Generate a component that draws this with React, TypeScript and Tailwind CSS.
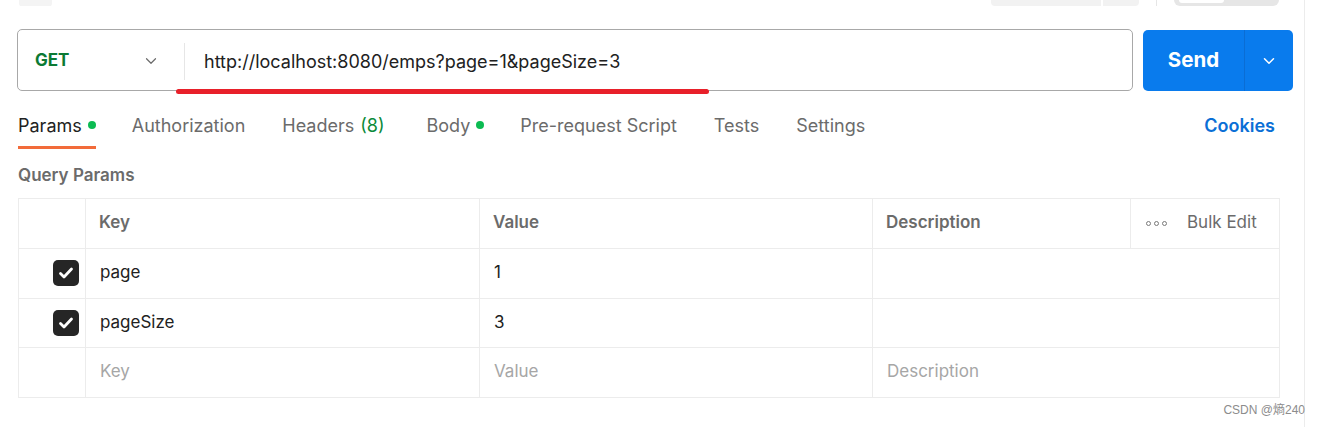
import { ChevronDown } from "lucide-react";

const tabs = [
  { label: "Params", dot: true, active: true, gap: "mr-[36px]" },
  { label: "Authorization", gap: "mr-[37px]" },
  { label: "Headers", count: "(8)", gap: "mr-[42px]" },
  { label: "Body", dot: true, gap: "mr-[36px]" },
  { label: "Pre-request Script", gap: "mr-[37px]" },
  { label: "Tests", gap: "mr-[37px]" },
  { label: "Settings", gap: "" },
];

const rows = [
  { key: "page", value: "1", h: "h-[50px]" },
  { key: "pageSize", value: "3", h: "h-[49px]" },
];

function CheckBox() {
  return (
    <div className="flex h-[26px] w-[26px] items-center justify-center rounded-[5px] bg-[#262626]">
      <svg width="18" height="18" viewBox="0 0 18 18" fill="none">
        <path
          d="M3.5 9.5l3.5 3.5L14.5 5"
          stroke="#fff"
          strokeWidth="2.8"
          strokeLinecap="round"
          strokeLinejoin="round"
        />
      </svg>
    </div>
  );
}

export default function App() {
  return (
    <div className="relative h-[427px] w-[1320px] overflow-hidden bg-white font-['Inter','Liberation_Sans',sans-serif]">
      <div className="h-full w-[1305px] border-r border-[#ececec] pl-[17px]">
        {/* cut-off toolbar above */}
        <div className="flex h-[6px] items-end overflow-hidden">
          <div className="ml-[2px] -mb-px h-[8px] w-[33px] rounded-b-[4px] bg-[#f4f4f4]" />
          <div className="ml-[939px] flex h-[6px]">
            <div className="h-full w-[110px] rounded-bl-[4px] bg-[#f2f2f2]" />
            <div className="ml-[2px] h-full w-[36px] rounded-br-[4px] bg-[#f2f2f2]" />
          </div>
          <div className="ml-[17px] h-[6px] w-px bg-[#e6e6e6]" />
          <div className="ml-[17px] flex h-[6px] w-[105px] rounded-b-[6px] bg-[#e6e6e6] pl-[5px]">
            <div className="h-[3px] w-[45px] rounded-b-[3px] bg-white" />
          </div>
        </div>

        {/* request bar */}
        <div className="mt-[23px] flex h-[62px] pr-[11px]">
          <div className="relative flex flex-1 items-center rounded-[5px] border border-[#a8a8a8] pt-[2px]">
            <div className="flex w-[166px] items-center justify-between pl-[17px] pr-[24px]">
              <span className="text-[17px] font-bold text-[#0b7a34]">GET</span>
              <ChevronDown className="h-[18px] w-[18px] text-[#6b6b6b]" strokeWidth={1.6} />
            </div>
            <div className="h-[37px] w-px bg-[#e6e6e6]" />
            <span className="ml-[19px] text-[18px] text-[#212121]">
              http://localhost:8080/emps?page=1&amp;pageSize=3
            </span>
            <div className="absolute -bottom-[4px] left-[158px] h-[5px] w-[533px] rounded-full bg-[#e8202a]" />
          </div>
          <div className="ml-[10px] mt-px flex w-[150px] rounded-[5px] bg-[#097bed] text-white">
            <div className="flex w-[101px] items-center justify-center text-[20.5px] font-bold">
              Send
            </div>
            <div className="w-px bg-[#0a6dd4]" />
            <div className="flex flex-1 items-center justify-center">
              <ChevronDown className="h-[18px] w-[18px]" strokeWidth={2} />
            </div>
          </div>
        </div>

        {/* tabs */}
        <div className="mt-[21px] flex h-[37px] items-start pl-px pr-[29px] text-[18px] text-[#6b6b6b]">
          {tabs.map((t) => (
            <div
              key={t.label}
              className={`relative flex h-full items-start ${t.gap} ${t.active ? "border-b-[3px] border-[#f26b3a] text-[#212121]" : ""}`}
            >
              <span>{t.label}</span>
              {t.count && <span className="ml-[6px] text-[#0b8a3a]">{t.count}</span>}
              {t.dot && <span className="ml-[6px] mt-[9px] h-[8px] w-[8px] rounded-full bg-[#0cbb52]" />}
            </div>
          ))}
          <div className="ml-auto font-semibold text-[#0b6fd6]">Cookies</div>
        </div>

        <div className="mt-[14px] pl-px text-[17px] font-semibold text-[#6b6b6b]">Query Params</div>

        {/* params table */}
        <div className="mt-[9px] ml-px mr-[24px] border border-[#ececec] text-[17px]">
          <div className="flex h-[50px] border-b border-[#ececec] font-semibold text-[#6b6b6b]">
            <div className="w-[67px] border-r border-[#ececec]" />
            <div className="flex w-[394px] items-center border-r border-[#ececec] pl-[13px]">Key</div>
            <div className="flex w-[393px] items-center border-r border-[#ececec] pl-[13px]">Value</div>
            <div className="flex w-[258px] items-center border-r border-[#ececec] pl-[13px]">Description</div>
            <div className="flex flex-1 items-center pl-[15px] font-normal">
              <div className="flex gap-[3px]">
                <span className="h-[5px] w-[5px] rounded-full border-[1.5px] border-[#7a7a7a]" />
                <span className="h-[5px] w-[5px] rounded-full border-[1.5px] border-[#7a7a7a]" />
                <span className="h-[5px] w-[5px] rounded-full border-[1.5px] border-[#7a7a7a]" />
              </div>
              <span className="ml-[20px]">Bulk Edit</span>
            </div>
          </div>
          {rows.map((r) => (
            <div key={r.key} className={`flex ${r.h} border-b border-[#ececec] text-[#212121]`}>
              <div className="flex w-[67px] items-center justify-end border-r border-[#ececec] pr-[6px]">
                <CheckBox />
              </div>
              <div className="flex w-[394px] items-center border-r border-[#ececec] pl-[14px]">{r.key}</div>
              <div className="flex w-[393px] items-center border-r border-[#ececec] pl-[14px]">{r.value}</div>
              <div className="flex-1" />
            </div>
          ))}
          <div className="flex h-[49px] text-[#a6a6a6]">
            <div className="w-[67px] border-r border-[#ececec]" />
            <div className="flex w-[394px] items-center border-r border-[#ececec] pl-[14px]">Key</div>
            <div className="flex w-[393px] items-center border-r border-[#ececec] pl-[14px]">Value</div>
            <div className="flex flex-1 items-center pl-[14px]">Description</div>
          </div>
        </div>
      </div>

      <div className="absolute bottom-[8px] right-[15px] font-['Liberation_Sans','Noto_Sans_CJK_SC',sans-serif] text-[12px] text-[#8c8c8c]">
        CSDN @熵240
      </div>
    </div>
  );
}
